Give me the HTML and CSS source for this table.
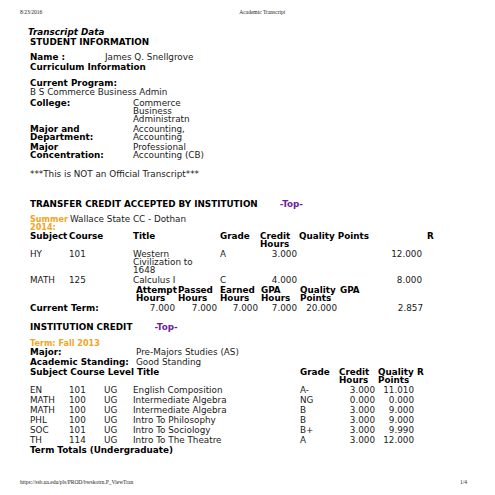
FILE: index.html
```html
<!DOCTYPE html>
<html>
<head>
<meta charset="utf-8">
<title>Academic Transcript</title>
<link rel="stylesheet" href="styles.css">
</head>
<body>
<div class="page">
  <header class="pagehead">
    <span class="date">8/23/2016</span>
    <span class="doctitle">Academic Transcript</span>
  </header>

  <main class="content">
    <div class="tdata">Transcript Data</div>
    <div class="line b">STUDENT INFORMATION</div>

    <div class="namerow line">
      <span class="b lbl-name">Name :</span>
      <span>James Q. Snellgrove</span>
    </div>
    <div class="line b">Curriculum Information</div>

    <div class="line b cp">Current Program:</div>
    <div class="bsline">B S Commerce Business Admin</div>

    <div class="prog">
      <div class="b">College:</div>
      <div>Commerce<br>Business<br>Administratn</div>
      <div class="b">Major and<br>Department:</div>
      <div>Accounting,<br>Accounting</div>
      <div class="b">Major<br>Concentration:</div>
      <div>Professional<br>Accounting (CB)</div>
    </div>

    <div class="line notice">***This is NOT an Official Transcript***</div>

    <div class="line b sechead">TRANSFER CREDIT ACCEPTED BY INSTITUTION <a class="top" href="#">-Top-</a></div>

    <div class="inst">
      <span class="orange b">Summer<br>2014:</span>
      <span>Wallace State CC - Dothan</span>
    </div>

    <div class="tgrid">
      <div class="b">Subject</div><div class="b">Course</div><div class="b">Title</div><div class="b">Grade</div><div class="b">Credit<br>Hours</div><div class="b">Quality Points</div><div class="b rcol">R</div>
      <div>HY</div><div>101</div><div>Western<br>Civilization to<br>1648</div><div>A</div><div class="num">3.000</div><div class="num">12.000</div><div></div>
      <div>MATH</div><div>125</div><div>Calculus I</div><div>C</div><div class="num">4.000</div><div class="num">8.000</div><div></div>
    </div>

    <div class="ctgrid">
      <div></div><div class="b">Attempt<br>Hours</div><div class="b">Passed<br>Hours</div><div class="b">Earned<br>Hours</div><div class="b">GPA<br>Hours</div><div class="b">Quality<br>Points</div><div class="b">GPA</div>
      <div class="b">Current Term:</div><div class="num">7.000</div><div class="num">7.000</div><div class="num">7.000</div><div class="num">7.000</div><div class="num">20.000</div><div class="num">2.857</div>
    </div>

    <div class="line b sechead2">INSTITUTION CREDIT <a class="top" href="#">-Top-</a></div>

    <div class="term orange b">Term: Fall 2013</div>
    <div class="mrow line"><span class="b lbl-major">Major:</span><span>Pre-Majors Studies (AS)</span></div>
    <div class="mrow line"><span class="b lbl-major">Academic Standing:</span><span>Good Standing</span></div>

    <div class="igrid">
      <div class="b span4">Subject Course Level Title</div><div class="b">Grade</div><div class="b">Credit<br>Hours</div><div class="b">Quality<br>Points</div><div class="b">R</div>
      <div>EN</div><div>101</div><div>UG</div><div>English Composition</div><div>A-</div><div class="num">3.000</div><div class="num">11.010</div><div></div>
      <div>MATH</div><div>100</div><div>UG</div><div>Intermediate Algebra</div><div>NG</div><div class="num">0.000</div><div class="num">0.000</div><div></div>
      <div>MATH</div><div>100</div><div>UG</div><div>Intermediate Algebra</div><div>B</div><div class="num">3.000</div><div class="num">9.000</div><div></div>
      <div>PHL</div><div>100</div><div>UG</div><div>Intro To Philosophy</div><div>B</div><div class="num">3.000</div><div class="num">9.000</div><div></div>
      <div>SOC</div><div>101</div><div>UG</div><div>Intro To Sociology</div><div>B+</div><div class="num">3.000</div><div class="num">9.990</div><div></div>
      <div>TH</div><div>114</div><div>UG</div><div>Intro To The Theatre</div><div>A</div><div class="num">3.000</div><div class="num">12.000</div><div></div>
    </div>
    <div class="line b">Term Totals (Undergraduate)</div>
  </main>

  <footer class="pagefoot">
    <span>https://ssb.ua.edu/pls/PROD/bwskotrn.P_ViewTran</span>
    <span>1/4</span>
  </footer>
</div>
</body>
</html>
```

FILE: styles.css
```css
html, body {
  margin: 0;
  padding: 0;
  background: #fff;
}

.page {
  width: 495px;
  height: 495px;
  display: flex;
  flex-direction: column;
  font-family: "DejaVu Sans", Verdana, sans-serif;
  font-size: 8.8px;
  line-height: 8px;
  color: #1a1a1a;
}

.pagehead, .pagefoot {
  font-family: "Liberation Serif", "Times New Roman", serif;
  font-size: 5.5px;
  line-height: 8px;
  color: #222;
  display: flex;
  padding: 8px 20px 0 20px;
}

.doctitle {
  margin-left: 197px;
}

.pagefoot {
  margin-top: auto;
  padding: 0 28px 9px 20px;
  justify-content: space-between;
}

.content {
  padding-left: 30px;
  display: flex;
  flex-direction: column;
  align-items: flex-start;
}

.b {
  font-weight: bold;
  color: #000;
}

.line {
  line-height: 10px;
}

.tdata {
  margin-top: 11px;
  margin-left: -2px;
  font-weight: bold;
  font-style: italic;
  line-height: 10px;
  color: #000;
}

.namerow {
  margin-top: 5px;
  display: flex;
}

.lbl-name {
  width: 75px;
}

.cp {
  margin-top: 6px;
}

.bsline {
  line-height: 9px;
}

.prog {
  display: grid;
  grid-template-columns: 103px auto;
  margin-top: 1px;
}

.prog > div {
  padding: 1px 0;
}

.notice {
  margin-top: 9px;
}

.sechead {
  margin-top: 20px;
}

.sechead2 {
  margin-top: 9px;
}

.top {
  color: #6b1fa0;
  text-decoration: none;
  margin-left: 19px;
}

.orange {
  color: #f2a524;
  font-size: 8.1px;
}

.inst {
  margin-top: 6px;
  display: flex;
  gap: 2px;
}

.tgrid {
  display: grid;
  grid-template-columns: 39px 64px 87px 40px 39px 126px 30px;
}

.tgrid > div, .ctgrid > div, .igrid > div {
  padding: 1px 0;
  white-space: nowrap;
}

.num {
  text-align: right;
  padding-right: 3px !important;
}

.tgrid .num:nth-child(7n+5) {
  padding-right: 2px !important;
}

.rcol {
  padding-left: 2px !important;
}

.ctgrid {
  display: grid;
  grid-template-columns: 106px 42px 42px 41px 39px 40px 86px;
}

.term {
  margin-top: 7px;
  line-height: 8px;
}

.mrow {
  display: flex;
}

.lbl-major {
  width: 106px;
}

.igrid {
  display: grid;
  grid-template-columns: 39px 35px 29px 167px 39px 39px 39px 20px;
}

.span4 {
  grid-column: span 4;
}
```
